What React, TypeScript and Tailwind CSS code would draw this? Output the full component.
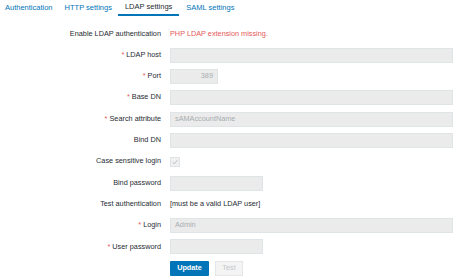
import React from "react";

const font = { fontFamily: '"Liberation Sans", Arial, sans-serif' };

function Label({ text, required }: { text: string; required?: boolean }) {
    return (
        <div className="w-[170px] shrink-0 text-right pr-[9px] text-[#1f2c33]">
            {required && <span className="text-[#e45959]">* </span>}
            {text}
        </div>
    );
}

function Input({ width, value, align }: { width: string; value?: string; align?: "right" }) {
    return (
        <div
            className={`${width} h-[15px] bg-[#ebebeb] border border-[#dfe4e7] px-[4px] flex items-center text-[#a7adb1] ${
                align === "right" ? "justify-end" : ""
            }`}
        >
            {value}
        </div>
    );
}

export default function App() {
    const wide = "w-[283px]";
    const narrow = "w-[93px]";
    return (
        <div className="w-[474px] h-[279px] bg-white overflow-hidden text-[7.3px]" style={font}>
            <div className="flex h-[16px] items-stretch pl-[5px] text-[7.5px]">
                <div className="flex items-center pr-[12px] text-[#0275b8]">Authentication</div>
                <div className="flex items-center pr-[6px] text-[#0275b8]">HTTP settings</div>
                <div className="flex items-center px-[7px] text-[#1f2c33] border-b-2 border-[#0275b8]">
                    LDAP settings
                </div>
                <div className="flex items-center pl-[7px] text-[#0275b8]">SAML settings</div>
            </div>

            <div className="flex flex-col gap-[6.3px] pt-[10.5px]">
                <div className="flex items-center h-[15px]">
                    <Label text="Enable LDAP authentication" />
                    <div className="text-[#e45959]">PHP LDAP extension missing.</div>
                </div>
                <div className="flex items-center h-[15px]">
                    <Label text="LDAP host" required />
                    <Input width={wide} />
                </div>
                <div className="flex items-center h-[15px]">
                    <Label text="Port" required />
                    <Input width="w-[48px]" value="389" align="right" />
                </div>
                <div className="flex items-center h-[15px]">
                    <Label text="Base DN" required />
                    <Input width={wide} />
                </div>
                <div className="flex items-center h-[15px]">
                    <Label text="Search attribute" required />
                    <Input width={wide} value="sAMAccountName" />
                </div>
                <div className="flex items-center h-[15px]">
                    <Label text="Bind DN" />
                    <Input width={wide} />
                </div>
                <div className="flex items-center h-[15px]">
                    <Label text="Case sensitive login" />
                    <div className="w-[10px] h-[10px] bg-[#f0f0f0] border border-[#dfe4e7] flex items-center justify-center">
                        <svg viewBox="0 0 10 10" className="w-[8px] h-[8px]">
                            <path d="M2 5.2 L4.2 7.2 L8 2.8" fill="none" stroke="#b8bec2" strokeWidth="1.2" />
                        </svg>
                    </div>
                </div>
                <div className="flex items-center h-[15px]">
                    <Label text="Bind password" />
                    <Input width={narrow} />
                </div>
                <div className="flex items-center h-[15px]">
                    <Label text="Test authentication" />
                    <div className="text-[#1f2c33]">[must be a valid LDAP user]</div>
                </div>
                <div className="flex items-center h-[15px]">
                    <Label text="Login" required />
                    <Input width={wide} value="Admin" />
                </div>
                <div className="flex items-center h-[15px]">
                    <Label text="User password" required />
                    <Input width={narrow} />
                </div>
                <div className="flex items-center h-[15px] pl-[170px] gap-[6px]">
                    <div className="w-[39px] h-[15px] bg-[#0275b8] text-white font-bold flex items-center justify-center rounded-[1px]">
                        Update
                    </div>
                    <div className="w-[28px] h-[15px] bg-[#f4f4f4] border border-[#e4e6e8] text-[#c3c7ca] flex items-center justify-center">
                        Test
                    </div>
                </div>
            </div>
        </div>
    );
}
